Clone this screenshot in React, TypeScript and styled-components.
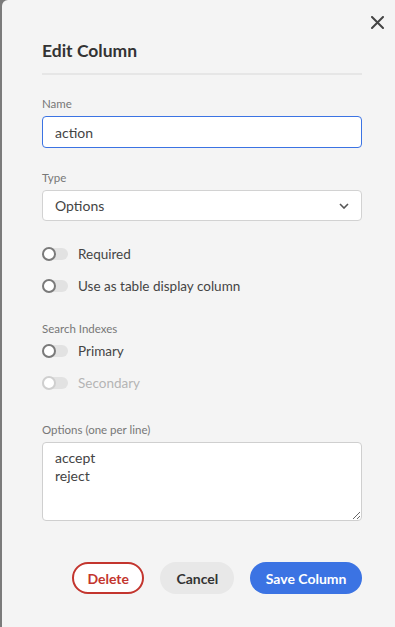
import React, { useState } from 'react';
import styled, { createGlobalStyle } from 'styled-components';

const GlobalStyle = createGlobalStyle`
  html, body {
    margin: 0;
    padding: 0;
    background: #7b7b7b;
    height: 100%;
  }
  #root {
    height: 100%;
  }
  * {
    box-sizing: border-box;
  }
`;

const Drawer = styled.div`
  margin-left: 2px;
  min-height: 627px;
  background: #f4f4f4;
  border-top-left-radius: 6px;
  position: relative;
  padding: 40px 33px 32px 40px;
  font-family: Lato, "Noto Sans", sans-serif;
  color: #333;
`;

const CloseButton = styled.button`
  position: absolute;
  top: 13px;
  right: 9px;
  width: 18px;
  height: 18px;
  padding: 0;
  border: none;
  background: none;
  cursor: pointer;
  display: flex;
  align-items: center;
  justify-content: center;
`;

const Title = styled.h2`
  margin: 0;
  font-size: 17.5px;
  font-weight: 700;
  color: #333;
  padding-bottom: 12px;
  border-bottom: 2px solid #e6e6e6;
`;

const Field = styled.div<{ $gap?: number }>`
  display: flex;
  flex-direction: column;
  gap: 6px;
  margin-top: ${(p) => p.$gap ?? 0}px;
`;

const Label = styled.label`
  font-size: 11.5px;
  color: #777;
`;

const TextInput = styled.input`
  height: 32px;
  padding: 0 12px;
  font-family: inherit;
  font-size: 14px;
  color: #444;
  background: #fff;
  border: 1px solid #3b73e3;
  border-radius: 4px;
  outline: none;
`;

const SelectBox = styled.div`
  height: 31px;
  background: #fff;
  border: 1px solid #d2d2d2;
  border-radius: 4px;
  display: flex;
  align-items: center;
  justify-content: space-between;
  padding: 0 12px;
  font-size: 14px;
  color: #444;
`;

const ToggleList = styled.div<{ $gap?: number }>`
  display: flex;
  flex-direction: column;
  gap: 18px;
  margin-top: ${(p) => p.$gap ?? 0}px;
`;

const ToggleRow = styled.label<{ $disabled?: boolean }>`
  display: flex;
  align-items: center;
  gap: 10px;
  font-size: 13.5px;
  color: ${(p) => (p.$disabled ? '#b4b4b4' : '#444')};
  height: 14px;
`;

const Track = styled.span`
  position: relative;
  width: 26px;
  height: 12px;
  border-radius: 6px;
  background: #e2e2e2;
  flex-shrink: 0;
`;

const Knob = styled.span<{ $disabled?: boolean }>`
  position: absolute;
  left: 0;
  top: -1px;
  width: 14px;
  height: 14px;
  border-radius: 50%;
  background: #fff;
  border: 2px solid ${(p) => (p.$disabled ? '#cfcfcf' : '#7a7a7a')};
`;

const TextArea = styled.textarea`
  height: 79px;
  padding: 6px 12px;
  font-family: inherit;
  font-size: 14px;
  line-height: 18px;
  color: #444;
  background: #fff;
  border: 1px solid #cfcfcf;
  border-radius: 4px;
  resize: vertical;
  outline: none;
`;

const Footer = styled.div`
  display: flex;
  justify-content: flex-end;
  gap: 16px;
  margin-top: 41px;
`;

const Button = styled.button<{ $variant: 'danger' | 'neutral' | 'primary' }>`
  height: 32px;
  padding: 0
    ${(p) => (p.$variant === 'danger' ? 13.5 : p.$variant === 'primary' ? 15.5 : 16)}px;
  border-radius: 16px;
  font-family: inherit;
  font-size: 14px;
  font-weight: 700;
  cursor: pointer;
  border: ${(p) => (p.$variant === 'danger' ? '2px solid #c3352e' : 'none')};
  background: ${(p) =>
    p.$variant === 'primary' ? '#3b73e3' : p.$variant === 'neutral' ? '#e8e8e8' : '#fff'};
  color: ${(p) =>
    p.$variant === 'primary' ? '#fff' : p.$variant === 'neutral' ? '#333' : '#c3352e'};
`;

function Toggle({ label, disabled }: { label: string; disabled?: boolean }) {
  return (
    <ToggleRow $disabled={disabled}>
      <Track>
        <Knob $disabled={disabled} />
      </Track>
      {label}
    </ToggleRow>
  );
}

export default function App() {
  const [name, setName] = useState('action');
  const [options, setOptions] = useState('accept\nreject');

  return (
    <>
      <GlobalStyle />
      <Drawer>
        <CloseButton aria-label="Close">
          <svg width="13" height="13" viewBox="0 0 13 13">
            <path d="M1 1 L12 12 M12 1 L1 12" stroke="#444" strokeWidth="2" strokeLinecap="round" />
          </svg>
        </CloseButton>
        <Title>Edit Column</Title>

        <Field $gap={22}>
          <Label>Name</Label>
          <TextInput value={name} onChange={(e) => setName(e.target.value)} />
        </Field>

        <Field $gap={23}>
          <Label>Type</Label>
          <SelectBox>
            Options
            <svg width="10" height="6" viewBox="0 0 10 6">
              <path d="M1 1 L5 5 L9 1" fill="none" stroke="#555" strokeWidth="1.6" />
            </svg>
          </SelectBox>
        </Field>

        <ToggleList $gap={26}>
          <Toggle label="Required" />
          <Toggle label="Use as table display column" />
        </ToggleList>

        <Field $gap={29}>
          <Label>Search Indexes</Label>
        </Field>
        <ToggleList $gap={9}>
          <Toggle label="Primary" />
          <Toggle label="Secondary" disabled />
        </ToggleList>

        <Field $gap={33}>
          <Label>Options (one per line)</Label>
          <TextArea value={options} onChange={(e) => setOptions(e.target.value)} />
        </Field>

        <Footer>
          <Button $variant="danger">Delete</Button>
          <Button $variant="neutral">Cancel</Button>
          <Button $variant="primary">Save Column</Button>
        </Footer>
      </Drawer>
    </>
  );
}
